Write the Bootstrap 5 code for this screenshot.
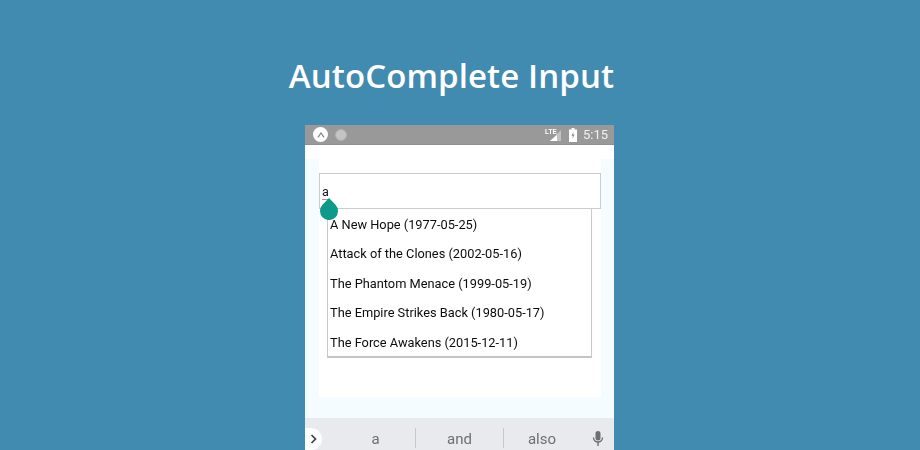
<!DOCTYPE html>
<html lang="en">
<head>
<meta charset="utf-8">
<title>AutoComplete Input</title>
<link rel="stylesheet" href="https://cdn.jsdelivr.net/npm/bootstrap@5.3.0/dist/css/bootstrap.min.css">
<style>
html,body{height:450px;overflow:hidden}
body{background:#418ab0;font-family:Roboto,"Liberation Sans",sans-serif;color:#1c1c1c}
.stage{width:920px;height:450px;padding-top:54px}
.headline{font-family:"Open Sans","Noto Sans",sans-serif;font-size:33px;font-weight:600;letter-spacing:.1px;color:#fff;line-height:44px;margin:0 17px 27px 0;text-align:center}
.phone{width:309px;height:325px;margin-left:305px;background:#f5fcff;filter:blur(.35px)}
.status{height:20px;flex:none;background:#999;border-bottom:1px solid #8f8f8f;padding:0 6px 0 8px}
.logo-dot{width:15px;height:15px;border-radius:50%;background:#fff}
.grey-dot{width:12px;height:12px;border-radius:50%;background:#c4c4c4;border:1px solid #b0b0b0;margin-left:7px}
.clock{font-size:13px;color:#f0f0f0;margin-left:6px}
.topgap{height:14px;flex:none;background:#fff}
.body-pane{height:259px;flex:none;padding:0 13px 0 14px}
.sheet{height:238px;background:#fff;padding-top:14px;position:relative}
.field{height:36px;border:1px solid #c9cdd0;background:#fff;font-size:12.5px;line-height:14px;padding:11px 2px 0;color:#111}
.typed{border-bottom:1px solid #d08a8a}
.drop-pin{position:absolute;left:1px;top:39px}
.options{margin:0 9px 0 8px;border:1px solid #c9c9c9;border-top:0;border-bottom:2px solid #c4c4c4;height:149px;background:#fff;padding-top:1px}
.opt{height:29.4px;line-height:29.4px;font-size:12.8px;padding-left:2px;white-space:nowrap;color:#0c0c0c}
.kbd{height:32px;flex:none;background:#e8eaed;color:#6b7075;font-size:15px}
.kbd-toggle{width:17px;height:22px;background:#fff;border-radius:0 11px 11px 0;margin-top:10px}
.sugg{line-height:16px;text-align:center;margin-top:13px}
.sugg-a{width:93px;padding-left:14px}
.sugg-and{width:87px}
.sugg-also{width:76px}
.sep{width:1px;height:20px;background:#c6c9cc;margin-top:10px}
.mic{margin:12px 0 0 11px}
</style>
</head>
<body>
<div class="stage">
  <h1 class="headline">AutoComplete Input</h1>
  <div class="phone d-flex flex-column">
    <div class="status d-flex align-items-center">
      <span class="logo-dot d-flex align-items-center justify-content-center">
        <svg width="8" height="6" viewBox="0 0 8 6"><path d="M1 5.3 4 1l3 4.3" fill="none" stroke="#8a8a8a" stroke-width="1.3"/></svg>
      </span>
      <span class="grey-dot"></span>
      <span class="ms-auto d-flex align-items-center">
        <svg width="17" height="15" viewBox="0 0 17 15"><path d="M16 3v11H5z" fill="#c2c2c2"/><path d="M12 8v6H5z" fill="#fff"/><text x="0" y="6.500" font-size="6.500" font-weight="700" fill="#fff" font-family="Liberation Sans">LTE</text></svg>
        <svg class="battery" style="margin-left:7px" width="8" height="14" viewBox="0 0 8 14"><path d="M2.500 0h3v1.500H8V14H0V1.500h2.500z" fill="#fff"/><path d="M4.600 3.500 2.500 7.800h1.400L3.400 11 5.600 6.500H4.100z" fill="#8a8a8a"/></svg>
        <span class="clock">5:15</span>
      </span>
    </div>
    <div class="topgap"></div>
    <div class="body-pane">
      <div class="sheet">
        <div class="field"><span class="typed">a</span></div>
        <svg class="drop-pin" width="18" height="22" viewBox="0 0 18 22"><path d="M9 0l6.500 6.800A9 9 0 1 1 2.500 6.800z" fill="#0e9a8a"/></svg>
        <div class="options">
          <div class="opt">A New Hope (1977-05-25)</div>
          <div class="opt">Attack of the Clones (2002-05-16)</div>
          <div class="opt">The Phantom Menace (1999-05-19)</div>
          <div class="opt">The Empire Strikes Back (1980-05-17)</div>
          <div class="opt">The Force Awakens (2015-12-11)</div>
        </div>
      </div>
    </div>
    <div class="kbd d-flex">
      <div class="kbd-toggle d-flex align-items-center justify-content-center">
        <svg width="7" height="10" viewBox="0 0 7 10"><path d="M1.500 1l4 4-4 4" fill="none" stroke="#3c4043" stroke-width="1.700"/></svg>
      </div>
      <div class="sugg sugg-a">a</div>
      <div class="sep"></div>
      <div class="sugg sugg-and">and</div>
      <div class="sep"></div>
      <div class="sugg sugg-also">also</div>
      <svg class="mic" width="14" height="18" viewBox="0 0 14 18"><rect x="4.500" y="1" width="5" height="9.500" rx="2.500" fill="#6b7075"/><path d="M2.500 7.500a4.500 4.500 0 0 0 9 0M7 12v4" fill="none" stroke="#6b7075" stroke-width="1.400"/></svg>
    </div>
  </div>
</div>
</body>
</html>
